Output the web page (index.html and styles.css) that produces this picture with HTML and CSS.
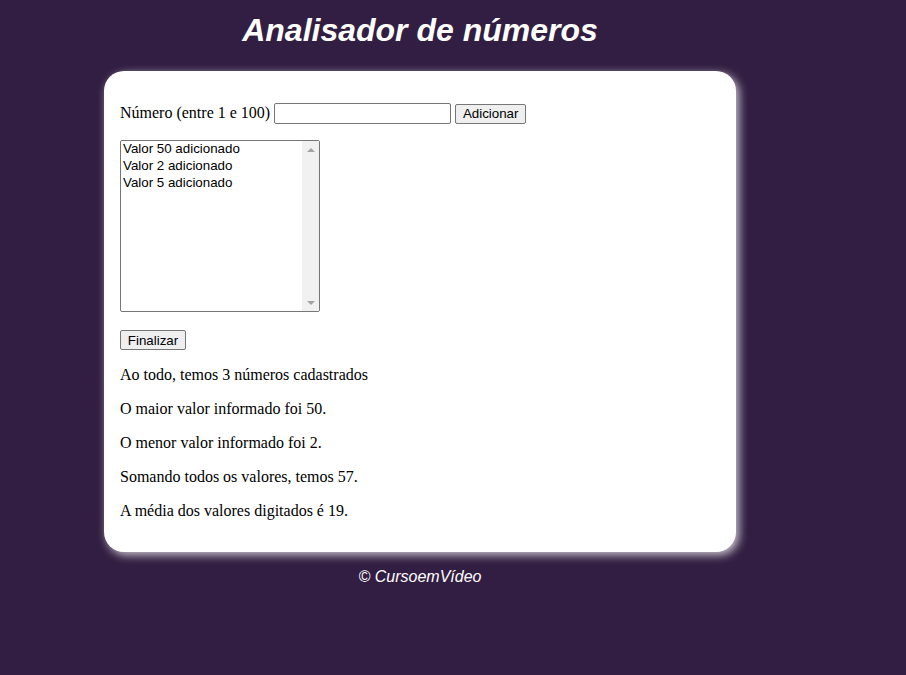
FILE: index.html
```html
<!DOCTYPE html>
<html lang="pt-BR">
<head>
<meta charset="UTF-8">
<title>Analisador de números</title>
<link rel="stylesheet" href="styles.css">
</head>
<body>
<div class="page">
  <header class="header">
    <h1 class="title">Analisador de números</h1>
  </header>
  <section class="card">
    <p class="row">
      <label for="txtn">Número (entre 1 e 100)</label>
      <input type="number" id="txtn" class="field">
      <input type="button" value="Adicionar" class="btn btn-add">
    </p>
    <div class="list-wrap">
      <select id="flista" class="list" size="10">
        <option>Valor 50 adicionado</option>
        <option>Valor 2 adicionado</option>
        <option>Valor 5 adicionado</option>
      </select>
      <div class="scrollbar" aria-hidden="true">
        <span class="arrow arrow-up"></span>
        <span class="arrow arrow-down"></span>
      </div>
    </div>
    <p class="row row-finish">
      <input type="button" value="Finalizar" class="btn btn-finish">
    </p>
    <div class="result">
      <p>Ao todo, temos 3 números cadastrados</p>
      <p>O maior valor informado foi 50.</p>
      <p>O menor valor informado foi 2.</p>
      <p>Somando todos os valores, temos 57.</p>
      <p>A média dos valores digitados é 19.</p>
    </div>
  </section>
  <footer class="footer">
    <p>&copy; CursoemVídeo</p>
  </footer>
</div>
</body>
</html>
```

FILE: styles.css
```css
html, body {
  margin: 0;
  padding: 0;
}
body {
  background: #321e42;
  font-family: "Liberation Serif", "Times New Roman", serif;
  font-size: 16px;
  color: #000;
}
.page {
  width: 632px;
  margin-left: 104px;
  padding-top: 12px;
}
.header {
  text-align: center;
}
.title {
  margin: 0;
  color: #fff;
  font-family: "Liberation Sans", Arial, sans-serif;
  font-style: italic;
  font-weight: bold;
  font-size: 32px;
  line-height: 37px;
}
.card {
  margin-top: 22px;
  background: #fff;
  border-radius: 20px;
  padding: 16px 16px;
  box-shadow: 3px 3px 10px rgba(255, 255, 255, 0.75);
}
.row {
  margin: 16px 0;
}
.field {
  width: 177px;
  height: 21px;
  box-sizing: border-box;
  border: 1px solid #767676;
  border-radius: 2px;
  font-size: 13.33px;
  padding: 1px 2px;
  vertical-align: baseline;
  -moz-appearance: textfield;
  appearance: textfield;
}
.field::-webkit-inner-spin-button,
.field::-webkit-outer-spin-button {
  -webkit-appearance: none;
  margin: 0;
}
.btn {
  font-family: "Liberation Sans", Arial, sans-serif;
  font-size: 13.33px;
  height: 20px;
  box-sizing: border-box;
  background: #efefef;
  border: 1px solid #767676;
  border-radius: 2px;
  padding: 1px 6px;
  color: #000;
}
.btn-add {
  width: 71px;
}
.btn-finish {
  width: 66px;
  vertical-align: top;
  margin-top: 2px;
}
.list-wrap {
  position: relative;
  width: 200px;
  height: 172px;
}
.list {
  display: block;
  width: 200px;
  height: 172px;
  box-sizing: border-box;
  border: 1px solid #767676;
  border-radius: 2px;
  font-family: "Liberation Sans", Arial, sans-serif;
  font-size: 13.33px;
  padding: 0 1px;
  overflow-y: hidden;
  background: #fff;
}
.list option {
  padding: 0 1px;
  line-height: 17px;
  min-height: 17px;
}
.scrollbar {
  position: absolute;
  top: 1px;
  right: 1px;
  bottom: 1px;
  width: 17px;
  background: #f1f1f1;
  display: flex;
  flex-direction: column;
  justify-content: space-between;
  align-items: center;
  padding: 7px 0 6px;
  box-sizing: border-box;
}
.arrow {
  width: 0;
  height: 0;
  border-left: 4px solid transparent;
  border-right: 4px solid transparent;
}
.arrow-up {
  border-bottom: 4px solid #a3a3a3;
}
.arrow-down {
  border-top: 4px solid #a3a3a3;
}
.result p {
  margin: 16px 0;
}
.footer {
  text-align: center;
  color: #fff;
  font-family: "Liberation Sans", Arial, sans-serif;
  font-style: italic;
  font-size: 16px;
}
.footer p {
  margin: 16px 0;
}
```
